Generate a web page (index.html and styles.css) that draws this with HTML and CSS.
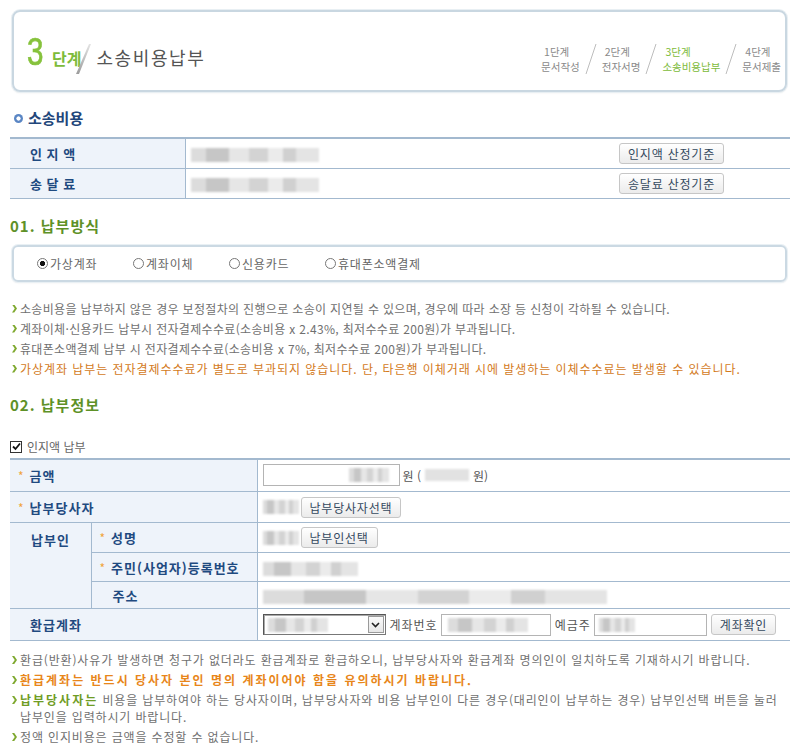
FILE: index.html
```html
<!DOCTYPE html>
<html lang="ko">
<head>
<meta charset="utf-8">
<title>소송비용납부</title>
<link rel="stylesheet" href="styles.css">
</head>
<body>
<div class="page">
  <header class="head">
    <div class="title">
      <span class="num">3</span><span class="dan">단계</span><svg class="tslash" width="16" height="30" viewBox="0 0 16 30"><defs><linearGradient id="sg" x1="0" y1="0" x2="0" y2="1"><stop offset="0" stop-color="#e4e4e4"/><stop offset="1" stop-color="#9c9c9c"/></linearGradient></defs><polygon points="13,0 15,0 3,30 0,30" fill="url(#sg)"/></svg><span class="name">소송비용납부</span>
    </div>
    <ol class="steps">
      <li class="step"><span>1단계</span><span>문서작성</span></li>
      <li class="sep"><svg width="12" height="32" viewBox="0 0 12 32"><line x1="1" y1="31" x2="11" y2="1" stroke="#bdbdbd" stroke-width="1"/></svg></li>
      <li class="step"><span>2단계</span><span>전자서명</span></li>
      <li class="sep"><svg width="12" height="32" viewBox="0 0 12 32"><line x1="1" y1="31" x2="11" y2="1" stroke="#bdbdbd" stroke-width="1"/></svg></li>
      <li class="step on"><span>3단계</span><span>소송비용납부</span></li>
      <li class="sep"><svg width="12" height="32" viewBox="0 0 12 32"><line x1="1" y1="31" x2="11" y2="1" stroke="#bdbdbd" stroke-width="1"/></svg></li>
      <li class="step"><span>4단계</span><span>문서제출</span></li>
    </ol>
  </header>

  <h2 class="sec"><span class="dot"></span>소송비용</h2>
  <table class="cost">
    <colgroup><col class="c-lab"><col class="c-val"><col class="c-btn"></colgroup>
    <tr>
      <th>인 지 액</th>
      <td><span class="blur b-cost"></span></td>
      <td class="btncell"><button class="btn">인지액 산정기준</button></td>
    </tr>
    <tr>
      <th>송 달 료</th>
      <td><span class="blur b-cost"></span></td>
      <td class="btncell"><button class="btn">송달료 산정기준</button></td>
    </tr>
  </table>

  <h3 class="num-title">01. 납부방식</h3>
  <div class="radios">
    <label class="radio"><span class="rb on"></span>가상계좌</label>
    <label class="radio"><span class="rb"></span>계좌이체</label>
    <label class="radio"><span class="rb"></span>신용카드</label>
    <label class="radio"><span class="rb"></span>휴대폰소액결제</label>
  </div>
  <ul class="notes first">
    <li>소송비용을 납부하지 않은 경우 보정절차의 진행으로 소송이 지연될 수 있으며, 경우에 따라 소장 등 신청이 각하될 수 있습니다.</li>
    <li>계좌이체·신용카드 납부시 전자결제수수료(소송비용 x 2.43%, 최저수수료 200원)가 부과됩니다.</li>
    <li>휴대폰소액결제 납부 시 전자결제수수료(소송비용 x 7%, 최저수수료 200원)가 부과됩니다.</li>
    <li class="orange">가상계좌 납부는 전자결제수수료가 별도로 부과되지 않습니다. 단, 타은행 이체거래 시에 발생하는 이체수수료는 발생할 수 있습니다.</li>
  </ul>

  <h3 class="num-title t2">02. 납부정보</h3>
  <div class="check"><span class="cb"><svg width="9" height="9" viewBox="0 0 9 9"><polyline points="1,4.5 3.5,7 8,1.5" fill="none" stroke="#111" stroke-width="1.8"/></svg></span>인지액 납부</div>
  <table class="info">
    <colgroup><col class="i1"><col class="i2"><col class="i3"></colgroup>
    <tr class="r1">
      <th colspan="2"><span class="star">*</span>금액</th>
      <td>
        <div class="vrow">
          <span class="inp amt"><span class="blur b-amt"></span></span>
          <span class="unit">원 (</span><span class="blur b-won"></span><span class="unit2">원)</span>
        </div>
      </td>
    </tr>
    <tr class="r2">
      <th colspan="2"><span class="star">*</span>납부당사자</th>
      <td><div class="vrow"><span class="blur b-name"></span><button class="btn">납부당사자선택</button></div></td>
    </tr>
    <tr class="r3">
      <th rowspan="3" class="grp">납부인</th>
      <th class="sub"><span class="star">*</span>성명</th>
      <td><div class="vrow"><span class="blur b-name"></span><button class="btn">납부인선택</button></div></td>
    </tr>
    <tr class="r4">
      <th class="sub"><span class="star">*</span>주민(사업자)등록번호</th>
      <td><span class="blur b-id"></span></td>
    </tr>
    <tr class="r5">
      <th class="sub plain">주소</th>
      <td><span class="blur b-addr"></span></td>
    </tr>
    <tr class="r6">
      <th colspan="2" class="plain">환급계좌</th>
      <td>
        <div class="vrow">
          <span class="sel"><span class="blur b-bank"></span><span class="arrow"><svg width="9" height="6" viewBox="0 0 9 6"><polyline points="1,1 4.5,4.5 8,1" fill="none" stroke="#222" stroke-width="1.6"/></svg></span></span>
          <span class="lbl">계좌번호</span>
          <span class="inp acc"><span class="blur b-acc"></span></span>
          <span class="lbl">예금주</span>
          <span class="inp own"><span class="blur b-own"></span></span>
          <button class="btn">계좌확인</button>
        </div>
      </td>
    </tr>
  </table>

  <ul class="notes last">
    <li>환급(반환)사유가 발생하면 청구가 없더라도 환급계좌로 환급하오니, 납부당사자와 환급계좌 명의인이 일치하도록 기재하시기 바랍니다.</li>
    <li class="orange strong">환급계좌는 반드시 당사자 본인 명의 계좌이어야 함을 유의하시기 바랍니다.</li>
    <li><strong class="green">납부당사자는</strong> 비용을 납부하여야 하는 당사자이며, 납부당사자와 비용 납부인이 다른 경우(대리인이 납부하는 경우) 납부인선택 버튼을 눌러<br>납부인을 입력하시기 바랍니다.</li>
    <li>정액 인지비용은 금액을 수정할 수 없습니다.</li>
  </ul>
</div>
</body>
</html>
```
FILE: styles.css
```css
* { box-sizing: border-box; }
body {
  margin: 0;
  background: #fff;
  font-family: "Noto Sans CJK KR", "Noto Sans", sans-serif;
  font-size: 12px;
  color: #707070;
}
.page { width: 800px; padding-bottom: 10px; }

/* header */
.head {
  margin: 10px 13px 0 12px;
  height: 82px;
  border: 2px solid #c9d7e1;
  border-radius: 8px;
  box-shadow: 0 0 0 1px #e8eff3, 0 1px 2px rgba(0,0,0,.08);
  display: flex;
  justify-content: space-between;
  padding: 0 4px 0 13px;
}
.title {
  padding-top: 21px;
  font-family: "Liberation Sans", sans-serif;
  font-size: 39px;
  line-height: 38px;
  white-space: nowrap;
}
.num {
  display: inline-block;
  width: 16px;
  color: #86c23c;
  transform: scaleX(.76);
  transform-origin: 0 0;
  -webkit-text-stroke: .7px #86c23c;
}
.dan {
  font-family: "Noto Sans CJK KR", sans-serif;
  font-weight: bold;
  font-size: 16px;
  color: #7dbb3a;
  margin-left: 9px;
}
.tslash { vertical-align: -9px; margin-left: -5px; }
.name {
  font-family: "Noto Sans CJK KR", sans-serif;
  font-size: 18px;
  color: #555;
  margin-left: 4px;
  letter-spacing: 1.6px;
}
.steps {
  list-style: none;
  margin: 0;
  padding: 32px 0 0;
  display: flex;
  align-items: flex-start;
  gap: 5px;
  font-size: 10.5px;
  line-height: 15px;
  color: #8a8a8a;
}
.step span { display: block; }
.step span:first-child { padding-left: 3px; }
.step.on { color: #7dbb3a; }
.sep svg { display: block; margin-top: -1px; }

/* section title */
.sec {
  margin: 17px 0 0 14px;
  font-size: 15px;
  line-height: 18px;
  font-weight: bold;
  color: #22467a;
  display: flex;
  align-items: center;
  gap: 5px;
}
.dot {
  width: 9px;
  height: 9px;
  border-radius: 50%;
  background: radial-gradient(circle, #ffffff 0 1.8px, #5a86c4 2.4px 4.5px);
}

/* cost table */
.cost {
  margin: 10px 0 0 10px;
  width: 780px;
  border-collapse: collapse;
  table-layout: fixed;
  border-top: 2px solid #a3b9cf;
}
.c-lab { width: 175px; }
.c-val { width: 430px; }
.c-btn { width: 175px; }
.cost tr { border-bottom: 1px solid #a3b9cf; }
.cost th {
  height: 30px;
  background: #eef3fa;
  border-right: 1px solid #a3b9cf;
  text-align: left;
  padding: 0 0 0 20px;
  font-size: 13px;
  font-weight: bold;
  color: #1f4a80;
  letter-spacing: .5px;
}
.cost td { height: 30px; padding: 0 0 0 5px; }
.btncell { padding-left: 4px !important; }

.btn {
  font-family: inherit;
  font-size: 12px;
  color: #34495e;
  height: 21px;
  padding: 0 8px;
  border: 1px solid #c6c6c6;
  border-radius: 3px;
  background: linear-gradient(#ffffff, #ebebeb);
  line-height: 19px;
  white-space: nowrap;
  letter-spacing: .8px;
}

/* blurred values */
.blur {
  display: inline-block;
  height: 14px;
  vertical-align: middle;
  filter: blur(1.2px);
  background: linear-gradient(90deg, #dcdcdc 0 12%, #c6c6c6 12% 30%, #e6e6e6 30% 45%, #d3d3d3 45% 60%, #ebebeb 60% 72%, #d0d0d0 72% 82%, #e4e4e4 82%);
}
.b-cost { width: 128px; }
.b-amt { width: 40px; }
.b-won { width: 44px; height: 12px; background: #e2e2e2; margin: 0 4px; }
.b-name { width: 36px; }
.b-id { width: 95px; }
.b-addr { width: 344px; }
.b-bank { width: 60px; margin-left: 4px; }
.b-acc { width: 80px; margin-left: 6px; }
.b-own { width: 36px; margin-left: 4px; }

/* numbered titles */
.num-title {
  margin: 18px 0 0 10px;
  font-size: 15px;
  line-height: 18px;
  font-weight: bold;
  color: #5e9127;
  letter-spacing: 1px;
}
.num-title.t2 { margin-top: 19px; }

/* radios */
.radios {
  margin: 10px 13px 0 12px;
  height: 37px;
  border: 2px solid #cbd9e3;
  border-radius: 6px;
  box-shadow: 0 0 0 1px #e9f0f4, 0 1px 2px rgba(0,0,0,.08);
  display: grid;
  grid-template-columns: 96px 96px 96px auto;
  align-items: center;
  padding-left: 23px;
  color: #666;
}
.radio { display: flex; align-items: center; letter-spacing: .8px; }
.rb {
  width: 11px;
  height: 11px;
  border: 1px solid #777;
  border-radius: 50%;
  margin-right: 2px;
  background: #fff;
}
.rb.on { background: radial-gradient(circle, #111 0 2.4px, #fff 2.9px); }

/* notes */
.notes {
  list-style: none;
  margin: 18px 0 0;
  padding: 0 0 0 12px;
  line-height: 17px;
}
.notes li { margin-bottom: 3px; padding-left: 8px; position: relative; white-space: nowrap; }
.notes li::before {
  content: "";
  position: absolute;
  left: 0;
  top: 5px;
  width: 5px;
  height: 8px;
  background: #7ea82e;
  clip-path: polygon(0 0, 45% 0, 100% 50%, 45% 100%, 0 100%, 55% 50%);
}
.notes.first li { letter-spacing: .33px; }
.notes.first li.orange { letter-spacing: .95px; }
.notes .orange { color: #d37a1c; }
.notes.last { margin-top: 10px; }
.notes.last li { letter-spacing: .85px; }
.notes.last li.strong { font-weight: bold; color: #e8861a; letter-spacing: 2px; }
.green { color: #6f9c24; letter-spacing: 2px; }

/* checkbox */
.check {
  margin: 25px 0 0 10px;
  display: flex;
  align-items: center;
  line-height: 16px;
  color: #666;
}
.cb {
  width: 12px;
  height: 12px;
  border: 1px solid #333;
  margin-right: 5px;
  display: flex;
  align-items: center;
  justify-content: center;
  background: #fff;
}

/* info table */
.info {
  margin: 3px 0 0 10px;
  width: 780px;
  border-collapse: collapse;
  table-layout: fixed;
  border-top: 2px solid #a3b9cf;
}
.i1 { width: 81px; }
.i2 { width: 166px; }
.info tr { border-bottom: 1px solid #a3b9cf; }
.info th {
  background: #eef3fa;
  border-right: 1px solid #a3b9cf;
  text-align: left;
  padding: 0 0 0 8px;
  font-size: 13px;
  font-weight: bold;
  color: #1f4a80;
  letter-spacing: 1px;
  white-space: nowrap;
}
.info th.plain { padding-left: 20px; }
.info th.sub.plain { padding-left: 21px; }
.info th.grp { vertical-align: top; padding: 7px 0 0 21px; }
.info td { padding: 0 0 0 5px; color: #555; }
.star { color: #f0a43a; font-weight: normal; margin-right: 5px; font-size: 12px; }
.r1 { height: 33px; }
.r2 { height: 31px; }
.r3 { height: 30px; }
.r4 { height: 29px; }
.r5 { height: 27px; }
.r6 { height: 32px; }

.vrow { display: flex; align-items: center; white-space: nowrap; }
.inp {
  display: inline-flex;
  align-items: center;
  height: 22px;
  border: 1px solid #b4b4b4;
  background: #fff;
}
.inp.amt { width: 137px; justify-content: flex-end; padding-right: 10px; }
.inp.acc { width: 110px; }
.inp.own { width: 113px; }
.unit { margin-left: 3px; }
.lbl { margin: 0 3px 0 4px; letter-spacing: 1px; }
.sel {
  display: inline-flex;
  align-items: center;
  justify-content: space-between;
  width: 123px;
  height: 21px;
  border: 1px solid #777;
  border-top-color: #555;
  border-left-color: #555;
  box-shadow: inset 1px 1px 0 #a9a9a9;
  background: #fff;
}
.arrow {
  width: 16px;
  height: 17px;
  border: 1px solid #9a9a9a;
  background: linear-gradient(#fafafa, #e6e6e6);
  display: flex;
  align-items: center;
  justify-content: center;
  margin-right: 1px;
}
.vrow .btn { margin-left: 2px; }
.r6 .btn { margin-left: 4px; }
```
